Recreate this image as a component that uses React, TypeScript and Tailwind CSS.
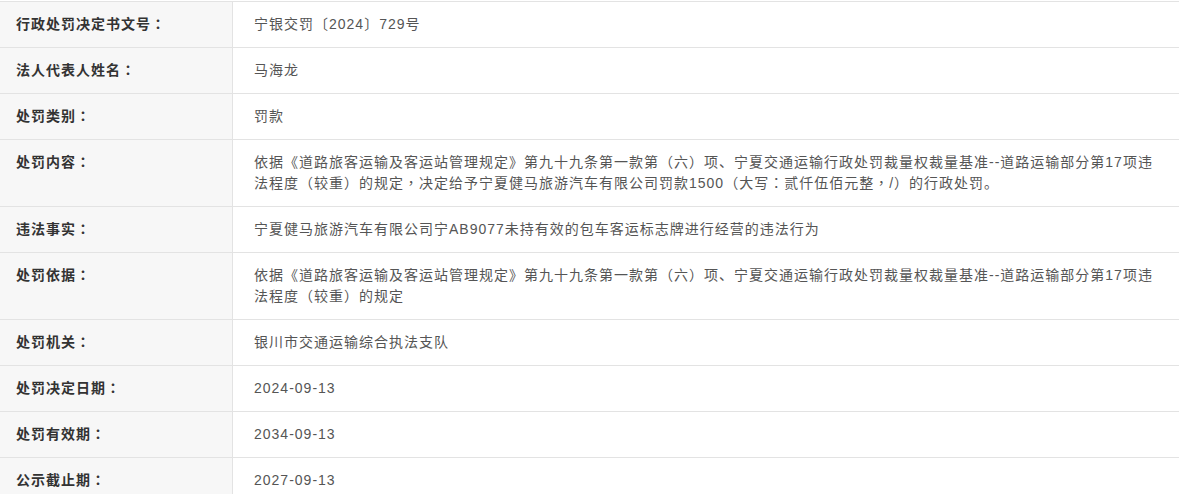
const rows: { label: string; value: string }[] = [
  { label: '行政处罚决定书文号：', value: '宁银交罚〔2024〕729号' },
  { label: '法人代表人姓名：', value: '马海龙' },
  { label: '处罚类别：', value: '罚款' },
  {
    label: '处罚内容：',
    value:
      '依据《道路旅客运输及客运站管理规定》第九十九条第一款第（六）项、宁夏交通运输行政处罚裁量权裁量基准--道路运输部分第17项违法程度（较重）的规定，决定给予宁夏健马旅游汽车有限公司罚款1500（大写：贰仟伍佰元整，/）的行政处罚。',
  },
  { label: '违法事实：', value: '宁夏健马旅游汽车有限公司宁AB9077未持有效的包车客运标志牌进行经营的违法行为' },
  {
    label: '处罚依据：',
    value:
      '依据《道路旅客运输及客运站管理规定》第九十九条第一款第（六）项、宁夏交通运输行政处罚裁量权裁量基准--道路运输部分第17项违法程度（较重）的规定',
  },
  { label: '处罚机关：', value: '银川市交通运输综合执法支队' },
  { label: '处罚决定日期：', value: '2024-09-13' },
  { label: '处罚有效期：', value: '2034-09-13' },
  { label: '公示截止期：', value: '2027-09-13' },
]

// centred colons and commas, like the original page's font
function Punct({ text }: { text: string }) {
  const parts = text.split(/([：，])/)
  return (
    <>
      {parts.map((p, i) =>
        p === '：' || p === '，' ? (
          <span key={i} className="leading-[0]" style={{ fontFamily: '"Noto Sans CJK TC", sans-serif' }}>
            {p}
          </span>
        ) : (
          p
        ),
      )}
    </>
  )
}

export default function App() {
  return (
    <div
      className="h-[494px] w-[1180px] overflow-hidden bg-white pt-px"
      style={{ fontFamily: '"Liberation Sans", "Noto Sans CJK SC", sans-serif' }}
    >
      <div className="w-[1179px] border-t border-[#e3e3e3]">
        {rows.map((r) => (
          <div key={r.label} className="flex border-b border-[#e3e3e3]">
            <div className="w-[233px] shrink-0 border-r border-[#e3e3e3] bg-[#f7f7f7] py-3 pl-4 text-[14px] leading-[21px] font-bold tracking-[1px] text-[#333]">
              <Punct text={r.label} />
            </div>
            <div className="flex-1 py-3 pl-[21px] pr-5 text-[14px] leading-[21px] tracking-[1px] text-[#555]">
              <Punct text={r.value} />
            </div>
          </div>
        ))}
      </div>
    </div>
  )
}
